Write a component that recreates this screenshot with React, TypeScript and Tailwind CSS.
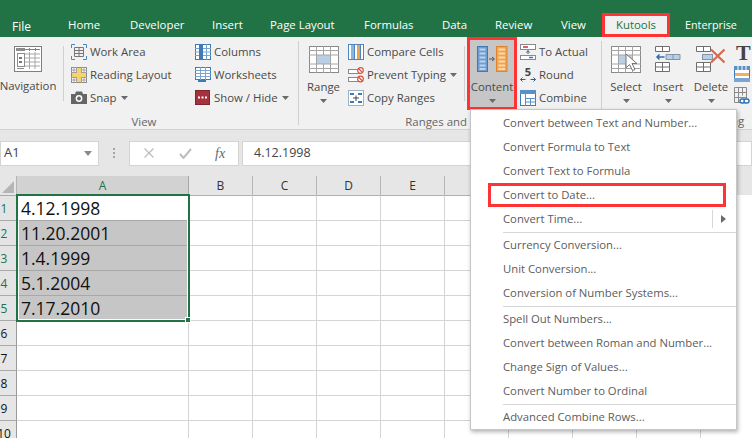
const tabs = [
  { label: "Home", width: "w-[33px]" },
  { label: "Developer", width: "w-[53px]" },
  { label: "Insert", width: "w-[29px]" },
  { label: "Page Layout", width: "w-[65px]" },
  { label: "Formulas", width: "w-[49px]" },
  { label: "Data", width: "w-[24px]" },
  { label: "Review", width: "w-[37px]" },
  { label: "View", width: "w-[25px]" },
];

const rows = ["4.12.1998", "11.20.2001", "1.4.1999", "5.1.2004", "7.17.2010", "", "", "", "", ""];
const otherCols = ["B", "C", "D", "E", "F", "G", "H", "I"];

const menu = [
  ["Convert between Text and Number...", "Convert Formula to Text", "Convert Text to Formula", "Convert to Date...", "Convert Time..."],
  ["Currency Conversion...", "Unit Conversion...", "Conversion of Number Systems..."],
  ["Spell Out Numbers...", "Convert between Roman and Number...", "Change Sign of Values...", "Convert Number to Ordinal"],
  ["Advanced Combine Rows..."],
];

const Caret = () => (
  <svg width="7" height="4" viewBox="0 0 7 4" className="shrink-0">
    <path d="M0 0h7L3.500 4z" fill="#6a6a6a" />
  </svg>
);

const NavIcon = () => (
  <svg width="28" height="26" viewBox="0 0 28 26">
    <rect x="0.500" y="0.500" width="27" height="25" fill="#fff" stroke="#7f7f7f" />
    <rect x="2" y="2" width="9" height="3" fill="#8c8c8c" />
    <path d="M11 3.500h15" stroke="#e05a4a" />
    <path d="M15.500 2v3M21.500 2v3" stroke="#e05a4a" />
    <path d="M11 8h15M11 12h15M11 16h15M11 20h15M15.500 6v17M21 6v17" stroke="#a8a8a8" />
    <rect x="3.500" y="7.500" width="7" height="13" fill="#fff" stroke="#8c8c8c" />
    <path d="M5 11h3v2H5zM5 15h3v2H5z" fill="#777" />
    <path d="M3 22.500h7" stroke="#8c8c8c" />
  </svg>
);

const WorkAreaIcon = () => (
  <svg width="16" height="16" viewBox="0 0 16 16" fill="none">
    <path d="M.5 4V.5H4M12 .5h3.500V4M15.500 12v3.500H12M4 15.500H.5V12" stroke="#4a86c5" />
    <path d="M3.500 3.500h9v9h-9zM3.500 6.500h9M3.500 9.500h9M8 3.500v9" stroke="#777" />
  </svg>
);

const ReadingIcon = () => (
  <svg width="16" height="16" viewBox="0 0 16 16">
    <rect x="0.500" y="0.500" width="15" height="15" fill="#fff" stroke="#8a8a8a" />
    <path d="M3 0v16M5.500 0v16M10.500 0v16M13 0v16M0 3h16M0 5.500h16M0 10.500h16M0 13h16" stroke="#a0a0a0" />
    <path d="M6 1h4v5h5v4h-5v5H6v-5H1V6h5z" fill="#f6d36b" />
  </svg>
);

const SnapIcon = () => (
  <svg width="16" height="13" viewBox="0 0 16 13">
    <path d="M0 3h4l1-2.500h6L12 3h4v10H0z" fill="#666" />
    <circle cx="8" cy="7.500" r="3.400" fill="#fff" />
    <circle cx="8" cy="7.500" r="1.900" fill="#666" />
  </svg>
);

const ColumnsIcon = () => (
  <svg width="16" height="16" viewBox="0 0 16 16">
    <rect x="0.500" y="0.500" width="15" height="15" fill="#fff" stroke="#3e79b8" />
    <rect x="4" y="0" width="4" height="16" fill="#3e79b8" />
    <path d="M11.500 0v16M8 4.500h8M8 8h8M8 11.500h8M0 4.500h4M0 8h4M0 11.500h4" stroke="#7ba5d0" />
  </svg>
);

const WorksheetsIcon = () => (
  <svg width="16" height="16" viewBox="0 0 16 16">
    <rect x="0.500" y="0.500" width="15" height="12" fill="#fff" stroke="#3e79b8" />
    <path d="M5.500 0v13M10.500 0v13M0 3.500h16M0 6.500h16M0 9.500h16" stroke="#7ba5d0" />
    <rect x="3" y="13" width="8" height="2" fill="#3e79b8" />
  </svg>
);

const ShowHideIcon = () => (
  <svg width="15" height="15" viewBox="0 0 15 15">
    <rect x="0.500" y="0.500" width="14" height="14" fill="#a5333e" stroke="#7f2430" />
    <path d="M3 6.500h2v2H3zM6.500 6.500h2v2h-2zM10 6.500h2v2h-2z" fill="#fff" />
  </svg>
);

const CompareIcon = () => (
  <svg width="16" height="16" viewBox="0 0 16 16">
    <rect x="0.500" y="0.500" width="15" height="15" fill="#fff" stroke="#4a86c5" />
    <rect x="3" y="1" width="3" height="14" fill="#8fb3d9" />
    <rect x="9" y="1" width="3" height="14" fill="#efa04c" />
    <path d="M6.500 0v16M12.500 0v16" stroke="#4a86c5" />
  </svg>
);

const PreventIcon = () => (
  <svg width="16" height="16" viewBox="0 0 16 16" fill="none">
    <rect x="0.500" y="2.500" width="11" height="4" stroke="#8a8a8a" fill="#fff" />
    <rect x="0.500" y="10.500" width="11" height="4" stroke="#8a8a8a" fill="#fff" />
    <circle cx="12.500" cy="3.500" r="2.800" stroke="#d8533f" fill="#fff" strokeWidth="1.200" />
    <circle cx="12.500" cy="12" r="2.800" stroke="#d8533f" fill="#fff" strokeWidth="1.200" />
    <path d="M10.500 1.500l4 4M10.500 10l4 4" stroke="#d8533f" strokeWidth="1.200" />
  </svg>
);

const CopyRangesIcon = () => (
  <svg width="16" height="16" viewBox="0 0 16 16">
    <rect x="0.500" y="0.500" width="15" height="15" fill="#fff" stroke="#9fb3c8" />
    <rect x="2" y="3" width="4" height="2" fill="#3e79b8" />
    <rect x="10" y="3" width="4" height="2" fill="#3e79b8" />
    <rect x="2" y="11" width="4" height="2" fill="#3e79b8" />
    <rect x="10" y="11" width="4" height="2" fill="#3e79b8" />
    <path d="M5 8h6M8 5.500V11" stroke="#444" />
  </svg>
);

const ContentIcon = () => (
  <svg width="31" height="26" viewBox="0 0 31 26">
    <rect x="0.500" y="0.500" width="10" height="25" fill="#6f9dd2" stroke="#3e79b8" />
    <path d="M2.500 2.500h6v2h-6zM2.500 6.500h6v2h-6zM2.500 10.500h6v2h-6zM2.500 14.500h6v2h-6zM2.500 18.500h6v2h-6zM2.500 22h6v2h-6z" fill="#bcd3ec" />
    <rect x="19.500" y="0.500" width="10.500" height="25" fill="#f0a550" stroke="#dd8430" />
    <path d="M21.500 2.500h6.500v2h-6.500zM21.500 6.500h6.500v2h-6.500zM21.500 10.500h6.500v2h-6.500zM21.500 14.500h6.500v2h-6.500zM21.500 18.500h6.500v2h-6.500zM21.500 22h6.500v2h-6.500z" fill="#fbd9ad" />
    <path d="M12 13h5M15 11l2.500 2-2.500 2" stroke="#555" fill="none" />
  </svg>
);

const ToActualIcon = () => (
  <svg width="16" height="16" viewBox="0 0 16 16">
    <rect x="0.500" y="0.500" width="15" height="5" fill="#fff" stroke="#8a8a8a" />
    <path d="M3 3h5" stroke="#c8323c" strokeWidth="1.500" />
    <rect x="0.500" y="11.500" width="15" height="4" fill="#fff" stroke="#8a8a8a" />
    <path d="M9 13.500h4" stroke="#3e79b8" strokeWidth="1.500" />
    <path d="M8 10V7M6.500 8.500L8 6.500l1.500 2" stroke="#2f5f94" fill="none" />
  </svg>
);

const RoundIcon = () => (
  <svg width="16" height="16" viewBox="0 0 16 16" fill="none">
    <text x="8" y="9" textAnchor="middle" fontSize="11" fontWeight="700" fill="#444" fontFamily="'Open Sans', sans-serif">5</text>
    <path d="M.5 12.500h5M2.500 10.500l-2 2 2 2M10.500 12.500h5M13.500 10.500l2 2-2 2" stroke="#2f5f94" />
  </svg>
);

const CombineIcon = () => (
  <svg width="16" height="16" viewBox="0 0 16 16">
    <rect x="0.500" y="0.500" width="15" height="15" fill="#fff" stroke="#3e79b8" />
    <rect x="0" y="0" width="16" height="4" fill="#5b8fc7" />
    <path d="M5.500 4v12M10.500 8v8M5 8.500h11M5 12h11" stroke="#5b8fc7" />
  </svg>
);

const GridBig = ({ children }: { children?: React.ReactNode }) => (
  <svg width="30" height="27" viewBox="0 0 30 27">
    <rect x="0.500" y="0.500" width="29" height="26" fill="#fff" stroke="#8a8a8a" />
    <rect x="7.500" y="9" width="14" height="9" fill="#b8cfe6" />
    <path d="M7.500 0v27M14.500 0v9M14.500 18v9M21.500 0v27M0 4.500h30M0 9h30M0 18h30M0 22.500h30" stroke="#a5a5a5" />
    {children}
  </svg>
);

const InsertIcon = () => (
  <svg width="26" height="26" viewBox="0 0 26 26">
    <path d="M.5.500h14v5H.5zM7.500.500v5M.5 16.500h14v9H.5zM.5 21h14M7.500 16.500v9" fill="#fff" stroke="#6f6f6f" />
    <path d="M11 8.500h14v5H11zM18 8.500v5" fill="#b8cfe6" stroke="#7f94a8" />
    <path d="M9.500 11H2M4.500 8.500L2 11l2.500 2.500" fill="none" stroke="#2f6fb0" strokeWidth="1.500" />
  </svg>
);

const DeleteIcon = () => (
  <svg width="30" height="26" viewBox="0 0 30 26">
    <path d="M.5.500h14v5H.5zM7.500.500v5M.5 16.500h14v9H.5zM.5 21h14M7.500 16.500v9" fill="#fff" stroke="#6f6f6f" />
    <rect x="6.500" y="8.500" width="10" height="5" fill="#b8cfe6" stroke="#7f94a8" />
    <path d="M15 3.500l13.500 13M28.500 3.500L15 16.500" stroke="#d9674a" strokeWidth="2.200" />
  </svg>
);

const TableBandIcon = () => (
  <svg width="16" height="16" viewBox="0 0 16 16">
    <rect x="0.500" y="0.500" width="15" height="15" fill="#fff" stroke="#3e79b8" />
    <rect x="0" y="0" width="16" height="4" fill="#5b8fc7" />
    <rect x="1" y="7" width="14" height="3" fill="#efb15e" />
    <path d="M4 0v5M8 0v5M12 0v5" stroke="#fff" />
    <rect x="0" y="12" width="16" height="4" fill="#7ba5d0" />
  </svg>
);

const LinkTableIcon = () => (
  <svg width="16" height="18" viewBox="0 0 16 18" fill="none">
    <path d="M.5.500h12v15H.5zM.5 5.500h12M.5 10.500h12M4.500.500v15M8.500.500v8" stroke="#8a8a8a" />
    <rect x="6" y="12" width="5" height="4" rx="2" stroke="#2f6fb0" strokeWidth="1.400" fill="#fff" />
    <rect x="10" y="12" width="5" height="4" rx="2" stroke="#2f6fb0" strokeWidth="1.400" fill="#fff" />
  </svg>
);

const SmallButton = ({ icon, label, caret }: { icon: React.ReactNode; label: string; caret?: boolean }) => (
  <div className="flex h-[23px] items-center">
    <div className="flex w-[19px] shrink-0 items-center">{icon}</div>
    <span className="whitespace-nowrap">{label}</span>
    {caret && <span className="ml-[4px]"><Caret /></span>}
  </div>
);

const BigButton = ({ icon, label, width }: { icon: React.ReactNode; label: string; width: string }) => (
  <div className={`flex flex-col items-center ${width}`}>
    <div className="flex h-[41px] items-start pt-[9px]">{icon}</div>
    <span className="whitespace-nowrap">{label}</span>
    <span className="mt-[4px]"><Caret /></span>
  </div>
);

const Separator = () => <div className="my-[9px] h-[55px] w-px shrink-0 bg-[#d0d0d0]" />;

export default function App() {
  return (
    <div className="relative h-[438px] w-[752px] overflow-hidden bg-white font-['Open_Sans',sans-serif] text-[11.4px] text-[#4a4a4a]">
      {/* Tabs */}
      <div className="flex h-[37px] items-end bg-[#217346] text-white">
        <span className="mb-[1px] ml-[12px] w-[56px] text-[12px]">File</span>
        <div className="flex h-[24px] gap-[29px]">
          {tabs.map((tab) => (
            <span key={tab.label} className={`whitespace-nowrap pt-[3px] ${tab.width}`}>
              {tab.label}
            </span>
          ))}
        </div>
        <div className="ml-[16px] flex h-[24px] w-[68px] items-center justify-center border-[3px] border-[#ff3333] bg-[#f1f1f1] text-[#217346]">
          Kutools
        </div>
        <span className="mb-[4px] ml-[15px] whitespace-nowrap text-[10.8px]">Enterprise</span>
      </div>

      {/* Ribbon */}
      <div className="flex h-[93px] border-b border-[#d2d2d2] bg-[#f1f1f1]">
        <div className="flex w-[298px] shrink-0 flex-col">
          <div className="flex h-[73px]">
            <div className="mr-[7px] flex w-[56px] shrink-0 flex-col items-center pt-[9px]">
              <NavIcon />
              <span className="mt-[5px] whitespace-nowrap">Navigation</span>
            </div>
            <Separator />
            <div className="ml-[7px] w-[124px] shrink-0 pt-[3px]">
              <SmallButton icon={<WorkAreaIcon />} label="Work Area" />
              <SmallButton icon={<ReadingIcon />} label="Reading Layout" />
              <SmallButton icon={<SnapIcon />} label="Snap" caret />
            </div>
            <div className="pt-[3px]">
              <SmallButton icon={<ColumnsIcon />} label="Columns" />
              <SmallButton icon={<WorksheetsIcon />} label="Worksheets" />
              <SmallButton icon={<ShowHideIcon />} label="Show / Hide" caret />
            </div>
          </div>
          <div className="pr-[10px] pt-[3px] text-center text-[#666]">View</div>
        </div>
        <div className="my-[4px] w-px shrink-0 bg-[#d0d0d0]" />

        <div className="flex w-[302px] shrink-0 flex-col">
          <div className="flex h-[73px]">
            <BigButton icon={<GridBig />} label="Range" width="w-[49px]" />
            <div className="w-[116px] shrink-0 pt-[3px]">
              <SmallButton icon={<CompareIcon />} label="Compare Cells" />
              <SmallButton icon={<PreventIcon />} label="Prevent Typing" caret />
              <SmallButton icon={<CopyRangesIcon />} label="Copy Ranges" />
            </div>
            <Separator />
            <div className="ml-[2px] flex w-[50px] shrink-0 flex-col items-center border-[3px] border-[#ff3333] bg-[#c6c6c6]">
              <div className="flex h-[38px] items-start pl-[1px] pt-[6px]"><ContentIcon /></div>
              <span>Content</span>
              <span className="mt-[4px]"><Caret /></span>
            </div>
            <div className="ml-[3px] pt-[3px]">
              <SmallButton icon={<ToActualIcon />} label="To Actual" />
              <SmallButton icon={<RoundIcon />} label="Round" />
              <SmallButton icon={<CombineIcon />} label="Combine" />
            </div>
          </div>
          <div className="pt-[3px] text-center text-[#666]">Ranges and Cells</div>
        </div>
        <div className="my-[4px] w-px shrink-0 bg-[#d0d0d0]" />

        <div className="flex w-[248px] shrink-0 flex-col">
          <div className="flex h-[73px] pl-[3px]">
            <BigButton
              icon={
                <GridBig>
                  <path d="M15 8v14l3.500-3.500 3 6 2.500-1-3-6h5z" fill="#fff" stroke="#777" />
                </GridBig>
              }
              label="Select"
              width="w-[42px]"
            />
            <BigButton icon={<InsertIcon />} label="Insert" width="w-[42px]" />
            <BigButton icon={<DeleteIcon />} label="Delete" width="w-[44px]" />
            <div className="ml-[1px] flex flex-col items-start gap-[5px] pt-[8px]">
              <span className="h-[16px] pl-[2px] font-['Liberation_Serif',serif] text-[22px] font-bold leading-[16px] text-[#444]">T</span>
              <TableBandIcon />
              <LinkTableIcon />
            </div>
          </div>
          <div className="pt-[3px] text-center text-[#666]">Editing</div>
        </div>
      </div>

      {/* Formula bar */}
      <div className="flex h-[46px] items-center bg-[#e6e6e6] text-[#444]">
        <div className="flex h-[25px] w-[99px] shrink-0 items-center justify-between border border-[#d4d4d4] bg-white pl-[3px] pr-[6px] text-[13px]">
          A1
          <svg width="8" height="5" viewBox="0 0 8 5">
            <path d="M0 0h8L4 5z" fill="#8a8a8a" />
          </svg>
        </div>
        <div className="ml-[14px] flex w-[16px] shrink-0 flex-col gap-[2px]">
          <span className="h-[2px] w-[2px] bg-[#a5a5a5]" />
          <span className="h-[2px] w-[2px] bg-[#a5a5a5]" />
          <span className="h-[2px] w-[2px] bg-[#a5a5a5]" />
        </div>
        <div className="flex h-[25px] w-[110px] shrink-0 items-center border border-[#d4d4d4] bg-white pl-[14px]">
          <svg width="10" height="10" viewBox="0 0 10 10">
            <path d="M.5.500l9 9M9.500.500l-9 9" stroke="#bdbdbd" strokeWidth="1.300" />
          </svg>
          <svg width="13" height="11" viewBox="0 0 13 11" className="ml-[25px]">
            <path d="M1 6l3.500 4L12 1" stroke="#bdbdbd" strokeWidth="2" fill="none" />
          </svg>
          <span className="ml-[23px] font-['Liberation_Serif',serif] text-[14px] italic text-[#666]">fx</span>
        </div>
        <div className="ml-[3px] flex h-[25px] flex-1 items-center border border-[#d4d4d4] bg-white pl-[11px] text-[12.5px]">
          4.12.1998
        </div>
      </div>

      {/* Sheet */}
      <div className="flex h-[19px] bg-[#e6e6e6] text-[12px] text-[#333]">
        <div className="relative w-[17px] shrink-0 border-r border-[#b5b5b5]">
          <svg width="12" height="12" viewBox="0 0 12 12" className="absolute left-[2px] top-[5px]">
            <path d="M12 0v12H0z" fill="#b5b5b5" />
          </svg>
        </div>
        <div className="flex w-[172px] shrink-0 items-center justify-center border-r border-[#a8a8a8] bg-[#d2d2d2] text-[#217346]">A</div>
        {otherCols.map((col) => (
          <div key={col} className="flex w-[64px] shrink-0 items-center justify-center border-r border-[#b5b5b5]">
            {col}
          </div>
        ))}
      </div>
      {rows.map((value, index) => (
        <div key={index} className="flex h-[25px] text-[#111]">
          <div
            className={`flex w-[17px] shrink-0 justify-center border-r border-t border-r-[#9a9a9a] border-t-[#aaaaaa] pr-[8px] pt-[4px] text-[12px] ${
              index < 5 ? "bg-[#e4e4e4] text-[#217346]" : "bg-[#e6e6e6]"
            }`}
          >
            {index + 1}
          </div>
          <div
            className={`flex w-[172px] shrink-0 items-center border-r border-t border-r-[#d4d4d4] pl-[4px] text-[17.5px] ${
              index > 0 && index < 5 ? "border-t-[#a8a8a8] bg-[#c6c6c6]" : "border-t-[#d4d4d4]"
            }`}
          >
            {value}
          </div>
          {otherCols.map((col) => (
            <div
              key={col}
              className={`w-[64px] shrink-0 border-r border-t border-r-[#d4d4d4] ${
                index === 0 ? "border-t-[#b0b0b0]" : "border-t-[#d4d4d4]"
              }`}
            />
          ))}
        </div>
      ))}

      {/* Selection frame */}
      <div className="absolute left-[16px] top-[194px] h-[128px] w-[174px] border-2 border-[#217346]">
        <div className="h-full w-full border border-white" />
      </div>
      <div className="absolute left-[185px] top-[317px] h-[6px] w-[6px] border border-white bg-[#217346]" />

      {/* Dropdown menu */}
      <div className="absolute left-[470px] top-[109px] h-[321px] w-[267px] border border-[#c6c6c6] bg-white pt-[1px] text-[11.3px] text-[#5c5c5c] shadow-[1px_2px_4px_rgba(0,0,0,0.3)]">
        {menu.map((section, sectionIndex) => (
          <div key={sectionIndex}>
            {sectionIndex > 0 && <div className="ml-[32px] mt-[1px] h-[1px] bg-[#d8d8d8]" />}
            {section.map((item) => (
              <div key={item} className="relative flex h-[24px] items-center whitespace-nowrap pl-[32px]">
                {item}
                {item === "Convert Time..." && (
                  <>
                    <span className="absolute right-[23px] top-[3px] h-[18px] w-px bg-[#d8d8d8]" />
                    <svg width="5" height="8" viewBox="0 0 5 8" className="absolute right-[10px] top-[8px]">
                      <path d="M0 0l5 4-5 4z" fill="#6a6a6a" />
                    </svg>
                  </>
                )}
                {item === "Convert to Date..." && (
                  <span className="absolute bottom-0 left-[17px] right-[10px] top-0 border-[3px] border-[#ff3333]" />
                )}
              </div>
            ))}
          </div>
        ))}
      </div>
    </div>
  );
}
